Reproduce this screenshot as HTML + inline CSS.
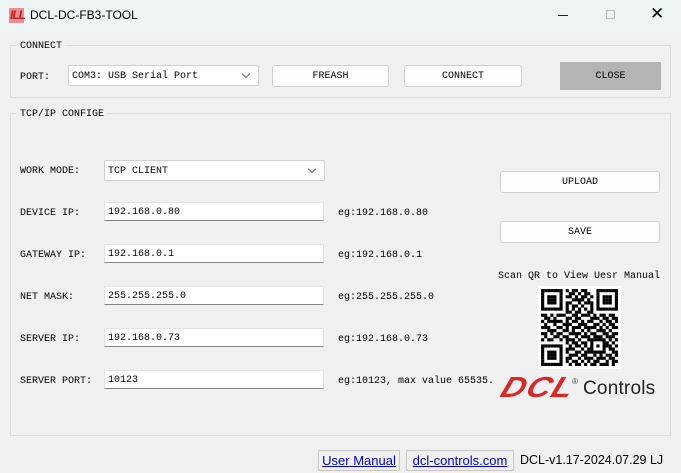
<!DOCTYPE html>
<html><head><meta charset="utf-8"><style>
*{margin:0;padding:0;box-sizing:border-box}
body{width:681px;height:473px;background:#f0f0f0;position:relative;overflow:hidden;font-family:"Liberation Mono",monospace;font-size:10px;color:#000}
.a{position:absolute}
.title{left:0;top:0;width:681px;height:32px;background:#eff4f6}
.grp{border:1px solid #dcdcdc}
.lbl{background:#f0f0f0;padding:0 3px}
.inp{background:#fff;border:1px solid #e3e3e3;border-bottom:1px solid #868686;height:19px;padding:4px 0 0 3px;font-size:10px}
.btn{background:#fdfdfd;border:1px solid #d0d0d0;border-radius:3px;text-align:center;line-height:22px}
.cb{background:#fff;border:1px solid #d0d0d0;border-radius:2px;height:21px;padding:5px 0 0 3px}
.cb:after{content:"";position:absolute;right:9px;top:5px;width:5px;height:5px;border-right:1px solid #666;border-bottom:1px solid #666;transform:rotate(45deg)}
.sans{font-family:"Liberation Sans",sans-serif}
</style></head><body>
<div class="a title"></div>
<div class="a" style="left:9px;top:8px;width:15px;height:15px;background:#e89090"><span class="a sans" style="left:1px;top:0;color:#c02020;font-weight:bold;font-size:12px;font-style:italic;letter-spacing:-1px">ILL</span></div>
<div class="a sans" style="left:30px;top:8px;font-size:12px">DCL-DC-FB3-TOOL</div>
<div class="a" style="left:558px;top:15px;width:10px;height:1px;background:#222"></div>
<div class="a" style="left:606px;top:10px;width:9px;height:9px;border:1px solid #bbb"></div>
<div class="a sans" style="left:650px;top:4px;font-size:17px;font-weight:300">✕</div>

<div class="a grp" style="left:10px;top:45px;width:661px;height:53px"></div>
<div class="a lbl" style="left:17px;top:41px">CONNECT</div>
<div class="a" style="left:20px;top:72px">PORT:</div>
<div class="a cb" style="left:68px;top:65px;width:191px">COM3: USB Serial Port</div>
<div class="a btn" style="left:272px;top:65px;width:117px;height:22px">FREASH</div>
<div class="a btn" style="left:404px;top:65px;width:118px;height:22px">CONNECT</div>
<div class="a" style="left:560px;top:62px;width:101px;height:28px;background:#b4b4b4;text-align:center;line-height:30px">CLOSE</div>

<div class="a grp" style="left:10px;top:113px;width:661px;height:323px"></div>
<div class="a lbl" style="left:17px;top:109px">TCP/IP CONFIGE</div>
<div class="a" style="left:20px;top:166px">WORK MODE:</div>
<div class="a cb" style="left:104px;top:160px;width:221px">TCP CLIENT</div>

<div class="a" style="left:20px;top:208px">DEVICE IP:</div>
<div class="a inp" style="left:104px;top:202px;width:220px">192.168.0.80</div>
<div class="a" style="left:338px;top:208px">eg:192.168.0.80</div>
<div class="a" style="left:20px;top:250px">GATEWAY IP:</div>
<div class="a inp" style="left:104px;top:244px;width:220px">192.168.0.1</div>
<div class="a" style="left:338px;top:250px">eg:192.168.0.1</div>
<div class="a" style="left:20px;top:292px">NET MASK:</div>
<div class="a inp" style="left:104px;top:286px;width:220px">255.255.255.0</div>
<div class="a" style="left:338px;top:292px">eg:255.255.255.0</div>
<div class="a" style="left:20px;top:334px">SERVER IP:</div>
<div class="a inp" style="left:104px;top:328px;width:220px">192.168.0.73</div>
<div class="a" style="left:338px;top:334px">eg:192.168.0.73</div>
<div class="a" style="left:20px;top:376px">SERVER PORT:</div>
<div class="a inp" style="left:104px;top:370px;width:220px">10123</div>
<div class="a" style="left:338px;top:376px">eg:10123, max value 65535.</div>

<div class="a btn" style="left:500px;top:171px;width:160px;height:22px">UPLOAD</div>
<div class="a btn" style="left:500px;top:221px;width:160px;height:22px">SAVE</div>
<div class="a" style="left:498px;top:271px">Scan QR to View Uesr Manual</div>
<svg class="a" id="qr" style="left:538px;top:286px" width="83" height="83" viewBox="-1 -1 27 27"><rect x="-1" y="-1" width="27" height="27" fill="#fff"/></svg>
<div class="a" style="left:502px;top:373px;color:#d42a2a;font-family:'Liberation Sans',sans-serif;font-weight:bold;font-style:italic;font-size:29px;letter-spacing:1px;transform:skewX(-20deg) scaleX(1.15);transform-origin:left;line-height:30px">DCL</div>
<div class="a sans" style="left:572px;top:377px;font-size:8px;color:#444">®</div>
<div class="a sans" style="left:583px;top:378px;font-size:19px;color:#222;letter-spacing:0.2px">Controls</div>

<div class="a" style="left:0;top:447px;width:681px;height:26px;background:#f0f0f0"></div>
<div class="a sans" style="left:318px;top:450px;width:82px;height:21px;border:1px solid #c8c8c8;color:#0000cc;text-decoration:underline;font-size:13px;text-align:center;line-height:19px">User Manual</div>
<div class="a sans" style="left:406px;top:450px;width:108px;height:21px;border:1px solid #c8c8c8;color:#0000cc;text-decoration:underline;font-size:13px;text-align:center;line-height:19px">dcl-controls.com</div>
<div class="a sans" style="left:520px;top:453px;font-size:12.5px;white-space:nowrap;width:143px;overflow:hidden">DCL-v1.17-2024.07.29 LJ</div>
<script>
var r=["1111111010110110001111111","1000001001101011001000001","1011101011010110101011101","1011101000111101001011101","1011101011001011101011101","1000001010110100101000001","1111111010101010101111111","0000000011011001100000000","1101011100110111010110110","0110100011011000111011011","1011111010110101100101101","0100100111001110011010110","1110011010111011110101011","0011100110100101001110100","1101011001111010110011011","0100110110010111011101110","1011001011101001111110101","0000000010110110100011010","1111111001011010101011101","1000001011100101100010110","1011101010011011111110011","1011101001110110010101101","1011101011001011101110110","1000001010110101011001011","1111111001011010110111010"];
var s=document.getElementById('qr'),h='';
for(var y=0;y<25;y++)for(var x=0;x<25;x++)if(r[y][x]=='1')h+='<rect x="'+x+'" y="'+y+'" width="1.02" height="1.02" fill="#000"/>';
s.innerHTML+=h;
</script>
</body></html>
